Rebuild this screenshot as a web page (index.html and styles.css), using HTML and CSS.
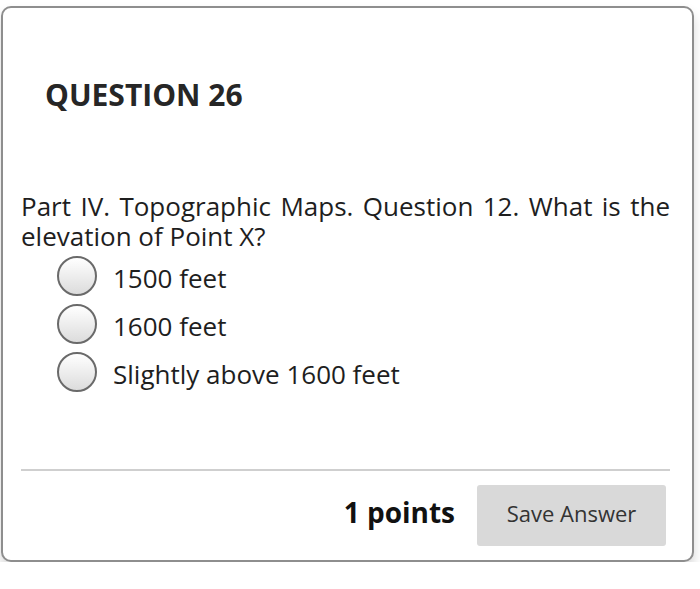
FILE: index.html
```html
<!DOCTYPE html>
<html lang="en">
<head>
<meta charset="utf-8">
<title>Question 26</title>
<link rel="stylesheet" href="styles.css">
</head>
<body>
<div class="card">
  <h2 class="title">QUESTION 26</h2>
  <p class="question">Part IV. Topographic Maps. Question 12. What is the elevation of Point X?</p>
  <ul class="options">
    <li class="option"><span class="radio"></span><span class="label">1500 feet</span></li>
    <li class="option"><span class="radio"></span><span class="label">1600 feet</span></li>
    <li class="option"><span class="radio"></span><span class="label">Slightly above 1600 feet</span></li>
  </ul>
  <div class="divider"></div>
  <div class="footer">
    <span class="points">1 points</span>
    <button class="save">Save Answer</button>
  </div>
</div>
</body>
</html>
```

FILE: styles.css
```css
html, body {
  margin: 0;
  padding: 0;
  background: #ffffff;
}
body {
  font-family: "Open Sans", "DejaVu Sans", sans-serif;
  color: #222;
}
.card {
  margin: 6px 0 0 1px;
  width: 693px;
  box-sizing: border-box;
  border: 2px solid #8e8e8e;
  border-radius: 10px;
  padding: 67px 22px 14px 18px;
  background: #fff;
  box-shadow: 0 7px 12px rgba(0, 0, 0, 0.16);
}
.title {
  margin: 0 0 0 24px;
  font-size: 30px;
  line-height: 40px;
  font-weight: 700;
  color: #262626;
}
.question {
  margin: 76px 0 0 0;
  font-size: 26px;
  line-height: 30px;
  color: #1e1e1e;
  text-align: justify;
}
.options {
  list-style: none;
  margin: 3px 0 0 0;
  padding: 0;
}
.option {
  display: flex;
  align-items: flex-start;
  height: 48px;
}
.radio {
  flex: none;
  width: 40px;
  height: 40px;
  margin: 2px 0 0 36px;
  box-sizing: border-box;
  border: 2px solid #6a6a6a;
  border-radius: 50%;
  background: linear-gradient(#ffffff, #dcdcdc);
}
.label {
  margin-left: 16px;
  font-size: 26px;
  line-height: 48px;
  color: #1e1e1e;
}
.divider {
  margin-top: 71px;
  height: 2px;
  background: #cfcfcf;
}
.footer {
  margin-top: 14px;
  display: flex;
  justify-content: flex-end;
  align-items: center;
  padding-right: 4px;
}
.points {
  font-size: 28px;
  font-weight: 700;
  color: #111;
  margin-right: 22px;
  margin-bottom: 8px;
}
.save {
  height: 61px;
  width: 189px;
  border: none;
  border-radius: 3px;
  background: #d9d9d9;
  font-family: "Open Sans", "DejaVu Sans", sans-serif;
  font-size: 22px;
  color: #333;
  padding: 0 0 6px 0;
}
```
